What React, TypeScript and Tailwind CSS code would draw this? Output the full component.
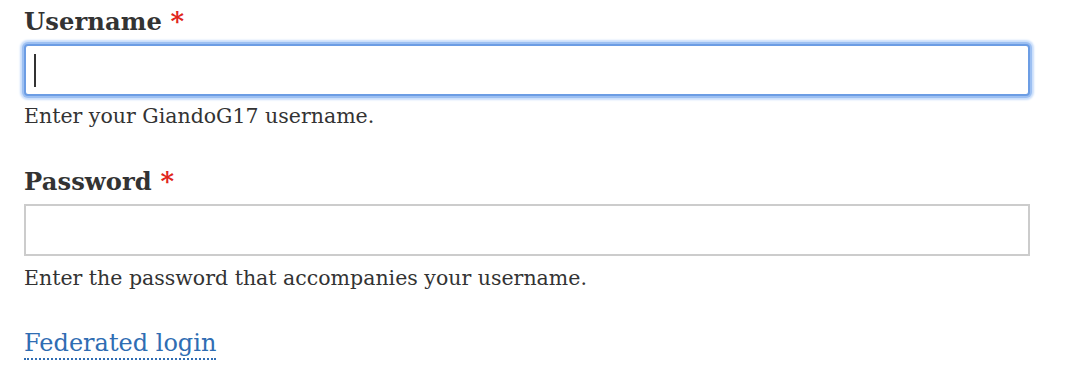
import React from "react";

const serif = { fontFamily: '"DejaVu Serif", serif' };

export default function App() {
  return (
    <div className="w-[1082px] h-[384px] bg-white overflow-hidden text-[#333333]" style={serif}>
      <div className="pl-[24px] w-[1030px]">
        <div className="mt-[5px] h-[33px] leading-[33px] text-[24.2px] font-bold tracking-[0.1px]">
          Username <span className="text-[#e0261c] text-[26px]">*</span>
        </div>
        <div className="mt-[6px] h-[52px] border-2 border-[#6c9de4] rounded-[4px] shadow-[0_0_0_2px_#9dc0f2,0_0_2px_4px_#c9defb] bg-white flex items-center pl-[8px]">
          <div className="w-[2px] h-[33px] bg-[#333333]" />
        </div>
        <div className="mt-[5px] h-[30px] leading-[30px] text-[20.5px]">
          Enter your GiandoG17 username.
        </div>
        <div className="mt-[34px] h-[33px] leading-[33px] text-[24.2px] font-bold tracking-[0.1px]">
          Password <span className="text-[#e0261c] text-[26px]">*</span>
        </div>
        <div className="mt-[6px] h-[52px] border-2 border-[#cccccc] bg-white" />
        <div className="mt-[7px] h-[30px] leading-[30px] text-[20.5px]">
          Enter the password that accompanies your username.
        </div>
        <div className="mt-[35px]">
          <a className="inline-block leading-[30px] text-[24px] text-[#2f6db3] border-b-2 border-dotted border-[#2f6db3]">
            Federated login
          </a>
        </div>
      </div>
    </div>
  );
}
